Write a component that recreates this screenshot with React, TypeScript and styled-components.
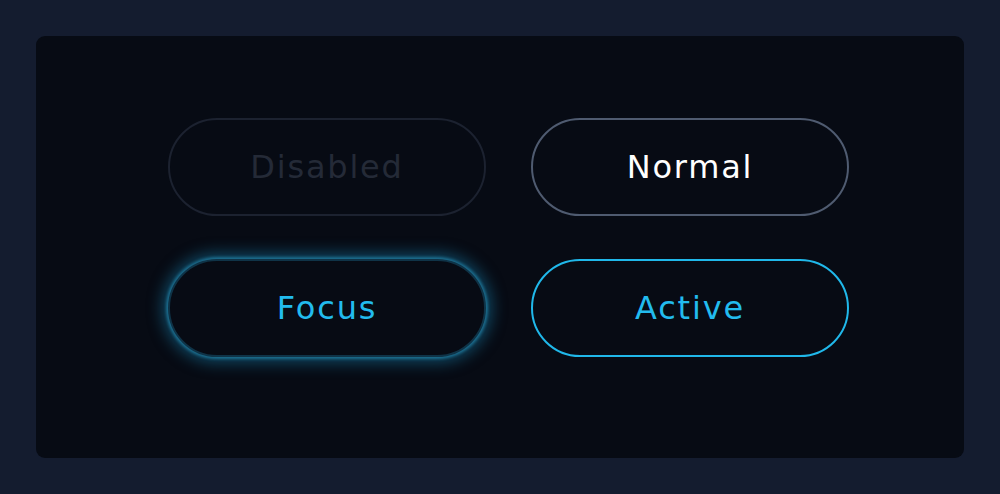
import React from "react";
import styled, { createGlobalStyle, css } from "styled-components";

type Variant = "disabled" | "normal" | "focus" | "active";

const GlobalStyle = createGlobalStyle`
  html, body {
    margin: 0;
    padding: 0;
    background: #141c2f;
  }
`;

const Page = styled.div`
  width: 1000px;
  height: 494px;
  box-sizing: border-box;
  padding: 36px;
  background: #141c2f;
  font-family: "DejaVu Sans", "Noto Sans", sans-serif;
`;

const Panel = styled.div`
  height: 100%;
  box-sizing: border-box;
  background: #070b14;
  border-radius: 9px;
  padding: 82px 0 0 132px;
  display: grid;
  grid-template-columns: 318px 318px;
  grid-auto-rows: 98px;
  column-gap: 45px;
  row-gap: 43px;
  align-content: start;
`;

const variants = {
  disabled: css`
    border-color: #1c2230;
    color: #242a37;
  `,
  normal: css`
    border-color: #4f5b70;
    color: #ffffff;
  `,
  focus: css`
    border-color: #0f3347;
    color: #22bbee;
    box-shadow: 0 0 3px 2px rgba(30, 120, 155, 0.85),
      0 0 14px 7px rgba(22, 115, 155, 0.5);
  `,
  active: css`
    border-color: #20b8ea;
    color: #22bbee;
  `,
};

const StateButton = styled.button<{ $variant: Variant }>`
  all: unset;
  box-sizing: border-box;
  display: flex;
  align-items: center;
  justify-content: center;
  border: 2px solid;
  border-radius: 49px;
  background: #070b14;
  font-family: "DejaVu Sans", "Noto Sans", sans-serif;
  font-size: 32px;
  font-weight: 400;
  letter-spacing: 1.8px;
  ${({ $variant }) => variants[$variant]}
`;

const buttons: { label: string; variant: Variant }[] = [
  { label: "Disabled", variant: "disabled" },
  { label: "Normal", variant: "normal" },
  { label: "Focus", variant: "focus" },
  { label: "Active", variant: "active" },
];

const App = () => {
  return (
    <>
      <GlobalStyle />
      <Page>
        <Panel>
          {buttons.map((b) => (
            <StateButton key={b.label} $variant={b.variant}>
              {b.label}
            </StateButton>
          ))}
        </Panel>
      </Page>
    </>
  );
};

export default App;
